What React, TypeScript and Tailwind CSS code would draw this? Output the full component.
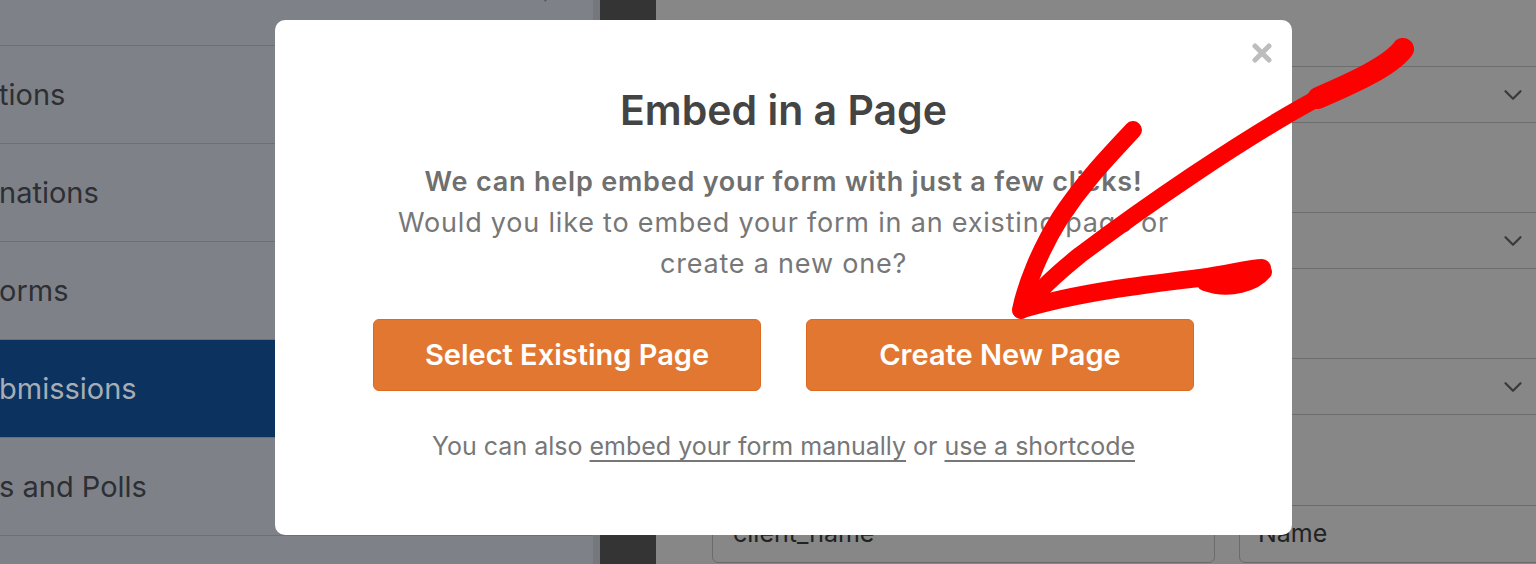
import { ChevronDown, ChevronRight } from "lucide-react";

const font = { fontFamily: "Inter, 'Liberation Sans', sans-serif" };

// ---------------------------------------------------------------------------
// Sidebar row (text is cut at the left edge, like the screenshot)
// ---------------------------------------------------------------------------
function SideRow({ label, active }: { label: string; active?: boolean }) {
  return (
    <div
      className={[
        "flex h-[98px] items-center border-b border-[#6c7076] text-[29px]",
        active ? "bg-[#0c3360] text-[#a7adb5]" : "text-[#2d2f33]",
      ].join(" ")}
    >
      <span className="-ml-[1px] pt-[1px]">{label}</span>
    </div>
  );
}

function SelectRow() {
  return (
    <div className="-mr-[20px] ml-[56px] flex h-[57px] items-center justify-end border-y border-[#6d6d6d] pr-[28px]">
      <ChevronDown className="h-[30px] w-[30px] text-[#3a3a3a]" strokeWidth={1.8} />
    </div>
  );
}

function RedArrow() {
  return (
    <svg
      className="pointer-events-none absolute left-0 top-0"
      width={1536}
      height={564}
      viewBox="0 0 1536 564"
      fill="none"
      stroke="#ff0000"
      strokeLinecap="round"
      strokeLinejoin="round"
    >
      <path d="M1403 49 C1390 66 1355 82 1318 98" strokeWidth={22} />
      <path d="M1318 98 C1240 140 1140 210 1080 255 C1055 275 1035 295 1025 308" strokeWidth={17} />
      <path d="M1133 130 C1110 155 1085 180 1060 218 C1040 250 1026 285 1021 310" strokeWidth={18} />
      <path d="M1023 309 C1080 292 1150 284 1200 278 C1230 274 1250 268 1262 268" strokeWidth={18} />
      <path d="M1205 283 C1230 292 1255 283 1264 272" strokeWidth={16} />
    </svg>
  );
}

export default function App() {
  return (
    <div className="relative flex h-[564px] w-[1536px] overflow-hidden" style={font}>
      {/* sidebar */}
      <div className="flex w-[593px] flex-col bg-[#7e8288]">
        <div className="flex h-[46px] shrink-0 justify-end border-b border-[#6c7076] pr-[34px]">
          <ChevronRight className="-mt-[16px] h-[22px] w-[22px] text-[#55585d]" />
        </div>
        <SideRow label="tions" />
        <SideRow label="nations" />
        <SideRow label="orms" />
        <SideRow label="bmissions" active />
        <SideRow label="s and Polls" />
      </div>
      <div className="w-[7px] bg-[#74777b]" />
      <div className="w-[56px] bg-[#343434]" />

      {/* right panel */}
      <div className="flex flex-1 flex-col bg-[#878787]">
        <div className="h-[66px] shrink-0" />
        <SelectRow />
        <div className="h-[89px] shrink-0" />
        <SelectRow />
        <div className="h-[89px] shrink-0" />
        <SelectRow />
        <div className="h-[90px] shrink-0" />
        <div className="flex gap-[24px] pl-[56px]">
          <div className="flex h-[58px] w-[503px] items-center rounded-[6px] border border-[#6b6b6b] px-[20px] text-[25px] text-[#222]">
            client_name
          </div>
          <div className="-mr-[40px] flex h-[58px] flex-1 items-center rounded-[6px] border border-[#6b6b6b] px-[18px] text-[25px] text-[#222]">
            Name
          </div>
        </div>
      </div>

      {/* modal */}
      <div className="absolute left-[275px] top-[20px] flex h-[515px] w-[1017px] flex-col items-center rounded-[10px] bg-white">
        <button className="absolute right-[19px] top-[22px]">
          <svg width={22} height={22} viewBox="0 0 22 22" stroke="#bdbdbd" strokeWidth={5} strokeLinecap="round">
            <path d="M4 4 L18 18 M18 4 L4 18" />
          </svg>
        </button>
        <h1 className="mt-[65px] text-[41px] font-semibold leading-[50px] text-[#444]">Embed in a Page</h1>
        <div className="mt-[26px] text-center text-[27px] leading-[41px] tracking-[0.8px] text-[#777]">
          <p className="font-semibold text-[#6f6f6f]">We can help embed your form with just a few clicks!</p>
          <p>Would you like to embed your form in an existing page or</p>
          <p>create a new one?</p>
        </div>
        <div className="mt-[35px] flex gap-[45px]">
          <button className="h-[72px] w-[388px] rounded-[6px] border border-[#dc6b22] bg-[#e27731] text-[29px] font-semibold text-white">
            Select Existing Page
          </button>
          <button className="h-[72px] w-[388px] rounded-[6px] border border-[#dc6b22] bg-[#e27731] text-[29px] font-semibold text-white">
            Create New Page
          </button>
        </div>
        <p className="mt-[37px] text-[25px] leading-[36px] text-[#777]">
          You can also <a className="underline underline-offset-[5px]">embed your form manually</a> or{" "}
          <a className="underline underline-offset-[5px]">use a shortcode</a>
        </p>
      </div>

      <RedArrow />
    </div>
  );
}
